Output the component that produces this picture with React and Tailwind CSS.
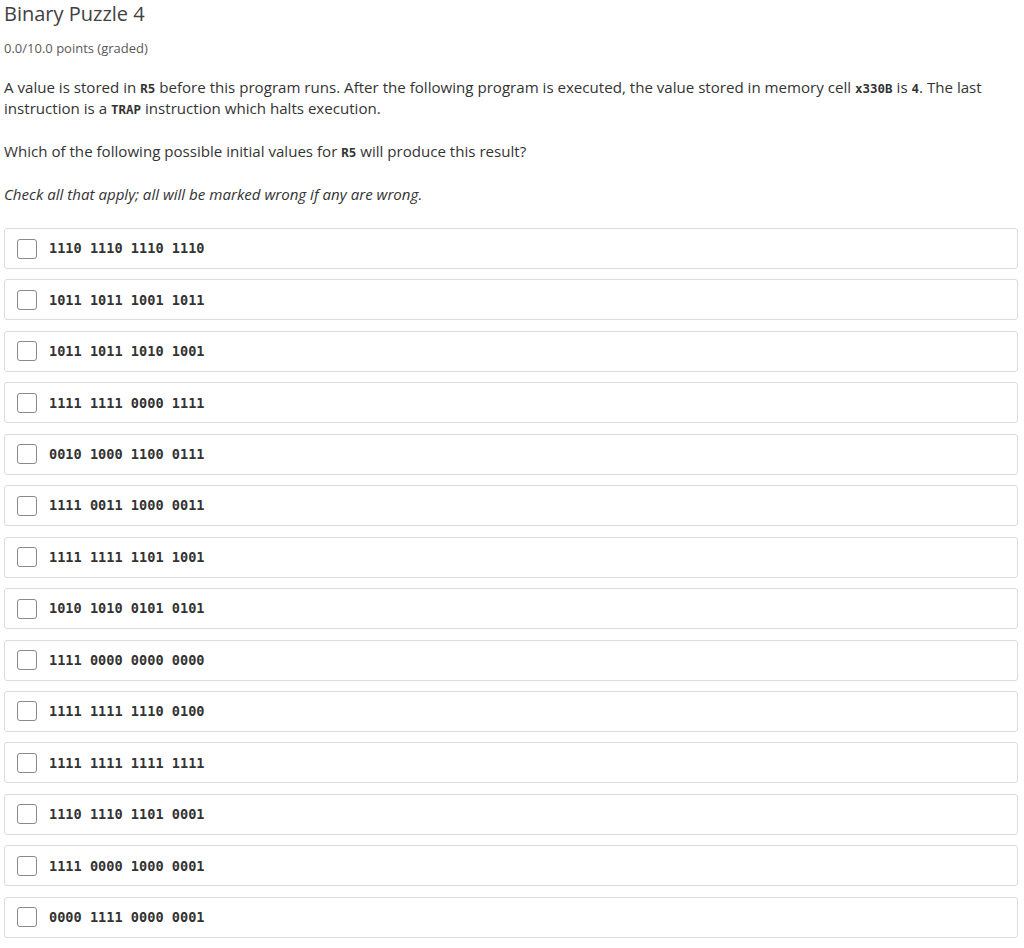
import React from "react";

const options = [
  "1110 1110 1110 1110",
  "1011 1011 1001 1011",
  "1011 1011 1010 1001",
  "1111 1111 0000 1111",
  "0010 1000 1100 0111",
  "1111 0011 1000 0011",
  "1111 1111 1101 1001",
  "1010 1010 0101 0101",
  "1111 0000 0000 0000",
  "1111 1111 1110 0100",
  "1111 1111 1111 1111",
  "1110 1110 1101 0001",
  "1111 0000 1000 0001",
  "0000 1111 0000 0001",
];

const sans = { fontFamily: '"Open Sans", "Noto Sans", sans-serif' };
const mono = { fontFamily: '"DejaVu Sans Mono", "Liberation Mono", monospace' };

function Code({ children }) {
  return (
    <code className="text-[12.5px] leading-none font-semibold text-[#333]" style={mono}>
      {children}
    </code>
  );
}

export default function App() {
  return (
    <div className="bg-white min-h-[948px] pl-[4px] pr-[6px] text-[#333]" style={sans}>
      <h2 className="text-[20px] leading-[28px] pt-0 text-[#414141]">Binary Puzzle 4</h2>
      <div className="text-[13px] leading-[20px] mt-[10px] text-[#595959]">0.0/10.0 points (graded)</div>
      <p className="text-[15.1px] leading-[21px] mt-[19px]">
        A value is stored in <Code>R5</Code> before this program runs. After the following program is executed, the value stored in memory cell <Code>x330B</Code> is <Code>4</Code>. The last instruction is a <Code>TRAP</Code> instruction which halts execution.
      </p>
      <p className="text-[15.1px] leading-[21px] mt-[22px]">
        Which of the following possible initial values for <Code>R5</Code> will produce this result?
      </p>
      <p className="text-[15.1px] leading-[21px] mt-[22px] italic">
        Check all that apply; all will be marked wrong if any are wrong.
      </p>
      <div className="flex flex-col gap-[10.45px] mt-[23px]">
        {options.map((o) => (
          <label
            key={o}
            className="flex items-center h-[41px] border border-[#dcdcdc] rounded-[3px] pl-[12px]"
          >
            <span className="w-[20px] h-[20px] border border-[#8a8a8a] rounded-[3px] bg-white shrink-0" />
            <span className="ml-[12px] text-[13.6px] font-semibold text-[#333]" style={mono}>
              {o}
            </span>
          </label>
        ))}
      </div>
    </div>
  );
}
